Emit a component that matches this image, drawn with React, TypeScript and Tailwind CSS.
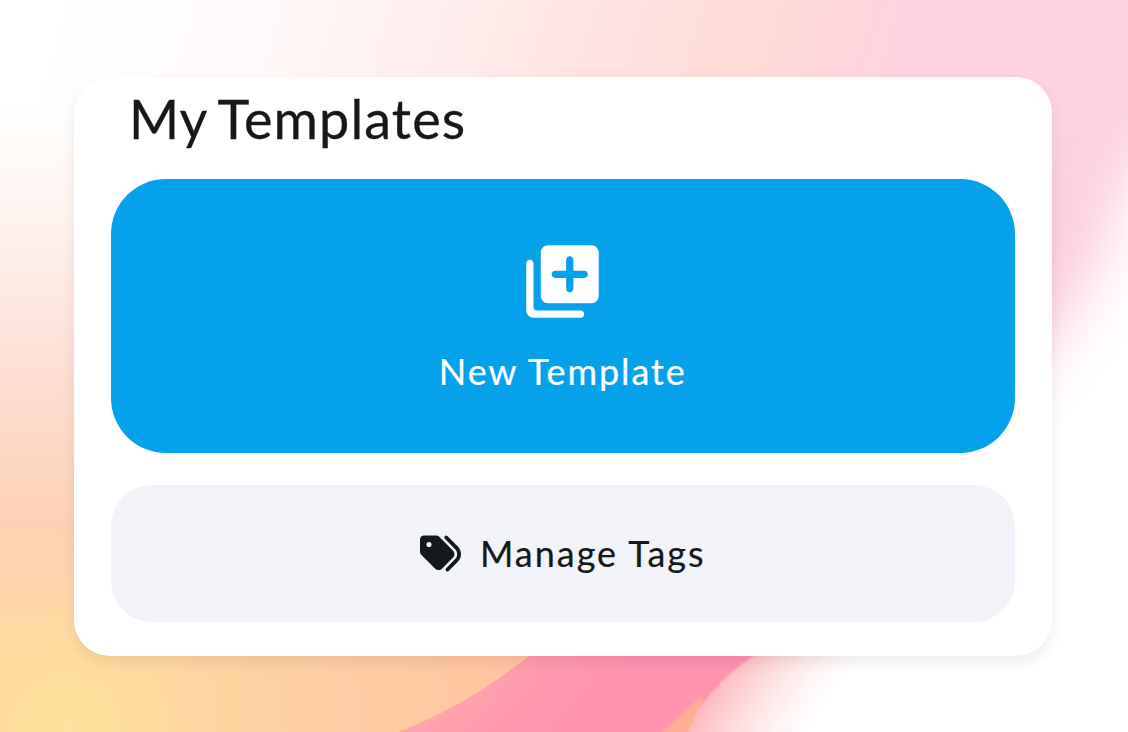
import { FaTags } from "react-icons/fa6";

// Soft pastel backdrop, drawn as large colour fields behind the card
function Backdrop() {
  return (
    <svg className="absolute inset-0 h-full w-full" viewBox="0 0 1128 732" preserveAspectRatio="none">
      <defs>
        <linearGradient id="left" x1="0" y1="0" x2="0" y2="1">
          <stop offset="0" stopColor="#ffffff" />
          <stop offset="0.17" stopColor="#fffdfb" />
          <stop offset="0.3" stopColor="#fff3ef" />
          <stop offset="0.5" stopColor="#fedfd4" />
          <stop offset="0.72" stopColor="#ffd1b3" />
          <stop offset="0.85" stopColor="#ffd6a6" />
          <stop offset="1" stopColor="#ffda9e" />
        </linearGradient>
        <linearGradient id="top" gradientUnits="userSpaceOnUse" x1="60" y1="0" x2="860" y2="240">
          <stop offset="0" stopColor="#ffffff" />
          <stop offset="0.22" stopColor="#fffafa" />
          <stop offset="0.5" stopColor="#ffebea" />
          <stop offset="0.68" stopColor="#ffe0de" />
          <stop offset="0.8" stopColor="#ffdbd6" />
          <stop offset="0.92" stopColor="#ffd6dc" />
          <stop offset="1" stopColor="#ffd3e0" />
        </linearGradient>
        <linearGradient id="right" x1="0" y1="0" x2="0" y2="1">
          <stop offset="0" stopColor="#ffd4e1" />
          <stop offset="0.4" stopColor="#fed0de" />
          <stop offset="1" stopColor="#ffbfd1" />
        </linearGradient>
        <linearGradient id="bottom" x1="0" y1="0" x2="1" y2="0">
          <stop offset="0" stopColor="#ffd9a1" stopOpacity="0" />
          <stop offset="0.25" stopColor="#ffd6a0" />
          <stop offset="0.65" stopColor="#ffcba2" />
          <stop offset="1" stopColor="#ffc09f" />
        </linearGradient>
        <radialGradient id="glow" gradientUnits="userSpaceOnUse" cx="70" cy="728" r="180">
          <stop offset="0" stopColor="#ffe29b" />
          <stop offset="1" stopColor="#ffd9a0" stopOpacity="0" />
        </radialGradient>
        <linearGradient id="pink" gradientUnits="userSpaceOnUse" x1="450" y1="650" x2="560" y2="740">
          <stop offset="0" stopColor="#ffa9a9" />
          <stop offset="0.55" stopColor="#ff9bad" />
          <stop offset="1" stopColor="#ff93b0" />
        </linearGradient>
        <linearGradient id="fade" gradientUnits="userSpaceOnUse" x1="706" y1="664" x2="806" y2="734">
          <stop offset="0" stopColor="#ff9fb3" />
          <stop offset="0.2" stopColor="#ffbdc2" />
          <stop offset="0.5" stopColor="#ffdfdf" />
          <stop offset="0.78" stopColor="#fff6f6" />
          <stop offset="1" stopColor="#ffffff" />
        </linearGradient>
        <filter id="blur" x="-50%" y="-50%" width="200%" height="200%">
          <feGaussianBlur stdDeviation="30" />
        </filter>
        <filter id="soft" x="-10%" y="-10%" width="120%" height="120%">
          <feGaussianBlur stdDeviation="1" />
        </filter>
      </defs>
      <rect width="1128" height="732" fill="#fff" />
      <rect width="560" height="732" fill="url(#left)" />
      <rect width="1128" height="110" fill="url(#top)" />
      <rect x="900" width="228" height="440" fill="url(#right)" />
      <path d="M960 430 L1040 350 L1090 278 L1128 180 L1240 40 V740 H960Z" fill="#fff" filter="url(#blur)" />
      <rect y="640" width="600" height="92" fill="url(#bottom)" />
      <rect y="530" width="270" height="202" fill="url(#glow)" />
      <path d="M398 732 Q468 705 530 655 L800 640 V732Z" fill="url(#pink)" />
      <path d="M660 734 L702 696 L700 734Z" fill="#ffae92" filter="url(#soft)" />
      <path d="M688 733 Q702 690 755 655 H900 V733Z" fill="url(#fade)" filter="url(#soft)" />
    </svg>
  );
}

export default function App() {
  return (
    <div className="relative h-[732px] w-[1128px] overflow-hidden bg-white pt-[77px] pl-[74px] font-['Lato',sans-serif] text-[#14181b]">
      <Backdrop />

      <div className="relative flex h-[579px] w-[977.5px] flex-col rounded-[36px] bg-white px-[37px] shadow-[0_6px_14px_rgba(0,0,0,0.08)]">
        <h1 className="h-[102px] pt-[9px] pl-[18px] text-[54px] leading-[66px] tracking-[1.1px] whitespace-nowrap [word-spacing:-3px] [-webkit-text-stroke:0.3px]">
          My Templates
        </h1>

        <button className="flex h-[274px] w-full shrink-0 flex-col items-center rounded-[55px] bg-[#05a1ea] pt-[59px] text-white">
          <svg className="mr-[1.5px] h-[87px] w-[87px]" viewBox="0 0 24 24" fill="currentColor">
            <path d="M3 6c-.55 0-1 .45-1 1v13c0 1.1.9 2 2 2h13c.55 0 1-.45 1-1s-.45-1-1-1H5c-.55 0-1-.45-1-1V7c0-.55-.45-1-1-1zm17-4H8c-1.1 0-2 .9-2 2v12c0 1.1.9 2 2 2h12c1.1 0 2-.9 2-2V4c0-1.1-.9-2-2-2zm-2 9h-3v3c0 .55-.45 1-1 1s-1-.45-1-1v-3h-3c-.55 0-1-.45-1-1s.45-1 1-1h3V6c0-.55.45-1 1-1s1 .45 1 1v3h3c.55 0 1 .45 1 1s-.45 1-1 1z" />
          </svg>
          <span className="mt-[24px] text-[36px] leading-[44px] tracking-[1.9px] [-webkit-text-stroke:0.2px]">
            New Template
          </span>
        </button>

        <button className="mt-8 flex h-[136.5px] w-full shrink-0 items-center justify-center gap-[19px] rounded-[41px] bg-[#f1f3f8]">
          <FaTags className="h-[41px] w-[41px]" />
          <span className="text-[36px] leading-[44px] tracking-[2px] [-webkit-text-stroke:0.2px]">Manage Tags</span>
        </button>
      </div>
    </div>
  );
}
